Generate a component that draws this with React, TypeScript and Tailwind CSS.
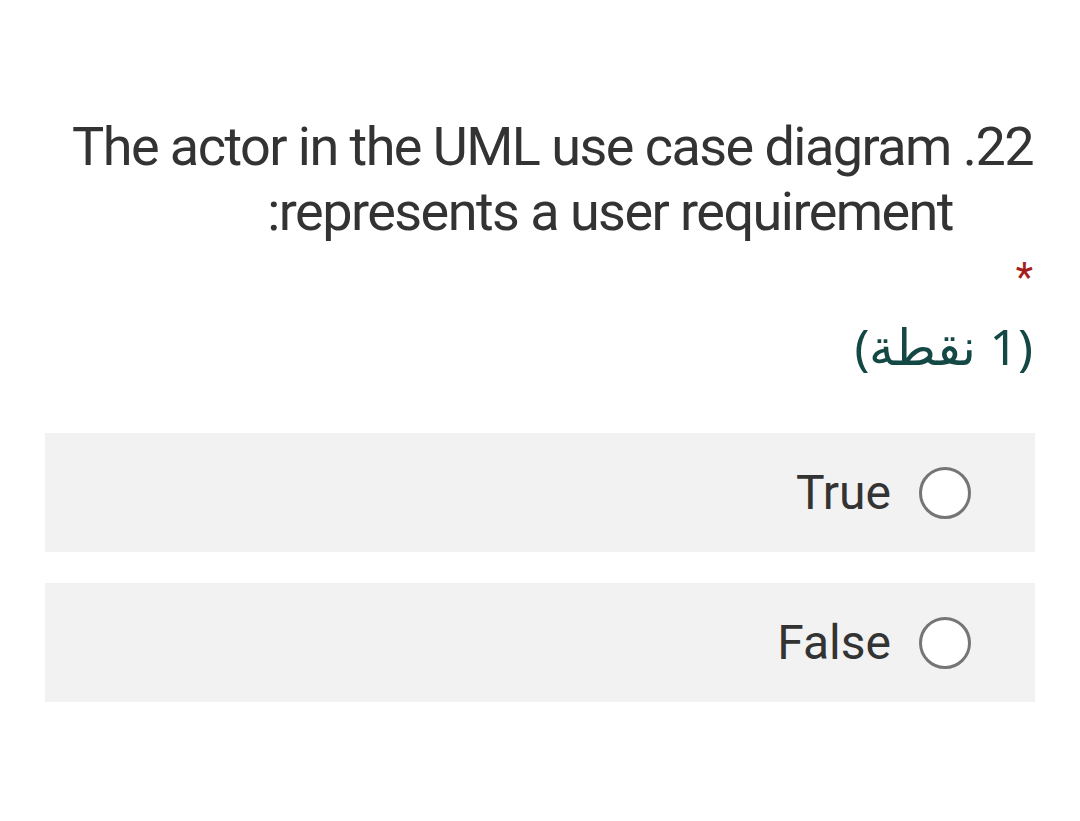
export default function App() {
  const options = ['True', 'False']

  return (
    <div dir="rtl" className="min-h-screen bg-white font-['Roboto',sans-serif] text-[#333333]">
      <div className="px-[45px] pt-[114px]">
        <div className="pr-[2px] text-[54px] leading-[65px] tracking-[-1.55px]">
          The actor in the UML use case diagram .22
          <br />
          <span className="pr-[80px]">represents a user requirement:</span>
        </div>
        <div className="mt-[14px] pr-[2px] text-[40px] leading-[40px] text-[#a61c1c]">*</div>
        <div className="mt-[20px] pr-[2px] font-['Noto_Sans',sans-serif] text-[50px] leading-[56px] tracking-[-2.5px] text-[#144845]">
          (1 نقطة)
        </div>
        <div className="mt-[59px] flex flex-col gap-[31px]">
          {options.map((opt) => (
            <label key={opt} className="flex h-[119px] items-center bg-[#f2f2f2] pr-[64px]">
              <span className="h-[52px] w-[52px] rounded-full border-[3px] border-[#757575] bg-white" />
              <span className="mr-[28px] text-[48px] leading-none text-[#333333]">{opt}</span>
            </label>
          ))}
        </div>
      </div>
    </div>
  )
}
